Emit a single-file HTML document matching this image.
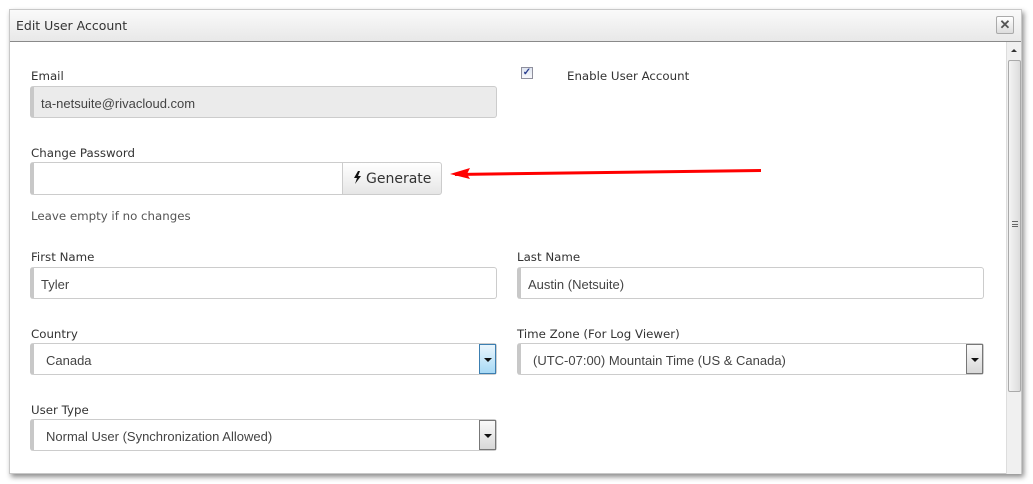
<!DOCTYPE html>
<html><head><style>
*{box-sizing:border-box;margin:0;padding:0}
body{width:1033px;height:484px;background:#fff;position:relative;overflow:hidden;font-family:"DejaVu Sans","Liberation Sans",sans-serif;font-size:12px;color:#333}
.dlg{position:absolute;left:9px;top:9px;width:1013px;height:465px;background:#fff;border:1px solid #c8c8c8;box-shadow:2px 3px 5px rgba(0,0,0,.45)}
.hdr{position:absolute;left:0;top:0;width:100%;height:32px;background:linear-gradient(#fafafa,#e8e8e8);border-bottom:1px solid #8a8a8a}
.hdr span{position:absolute;left:6px;top:8px;font-size:12.5px;color:#333}
.x{position:absolute;left:986px;top:6px;width:18px;height:18px;border:1px solid #aaa;border-radius:2px;background:linear-gradient(#fff,#ddd);font:bold 13px "Liberation Sans",sans-serif;color:#555;text-align:center;line-height:16px}
.lbl{position:absolute;font-size:11.8px;color:#333}
.inp{position:absolute;height:32px;border:1px solid #ccc;border-left:4px solid #c8c8c8;border-radius:3px;background:#fff;font:13px "Liberation Sans",sans-serif;color:#444;padding:8px 7px;padding-top:9px}
.sel{padding-left:12px}
.dd{position:absolute;right:0;top:0;width:17px;height:30px;border:1px solid #777;background:linear-gradient(#fafafa,#d8d8d8)}
.dd:after{content:"";position:absolute;left:4px;top:13px;border-left:4px solid transparent;border-right:4px solid transparent;border-top:4px solid #111}
.dd.blue{border-color:#3c7fb1;background:linear-gradient(#eaf6fd,#a7d9f5)}
.btn{position:absolute;left:342px;top:162px;width:100px;height:33px;border:1px solid #ccc;border-radius:0 3px 3px 0;background:linear-gradient(#fff,#e6e6e6);font:14px "DejaVu Sans",sans-serif;color:#333;padding-top:8px;padding-left:10px}
.sb{position:absolute;left:1006px;top:42px;width:15px;height:432px;background:#f0f0f0;border-left:1px solid #ddd}
.th{position:absolute;left:1px;top:18px;width:13px;height:332px;border:1px solid #aaa;border-radius:2px;background:linear-gradient(90deg,#f4f4f4,#dcdcdc)}
</style></head><body>
<div class="dlg">
 <div class="hdr"><span>Edit User Account</span><div class="x">✕</div></div>
</div>
<div class="sb"><div style="position:absolute;left:4px;top:7px;border-left:3px solid transparent;border-right:3px solid transparent;border-bottom:3px solid #333"></div><div class="th"><div style="position:absolute;left:3px;top:160px;width:6px;height:6px;border-top:1px solid #666;border-bottom:1px solid #666"><div style="margin-top:2px;border-top:1px solid #666"></div></div></div></div>

<div class="lbl" style="left:31px;top:69px">Email</div>
<div class="inp" style="left:30px;top:86px;width:467px;background:#ebebeb">ta-netsuite@rivacloud.com</div>

<div style="position:absolute;left:521px;top:67px;width:12px;height:12px;border:1px solid #8f8f9d;background:linear-gradient(#dfe5f0,#f8f8fb);font:bold 10px sans-serif;color:#2a3d8f;text-align:center;line-height:10px">✓</div>
<div class="lbl" style="left:567px;top:69px">Enable User Account</div>

<div class="lbl" style="left:31px;top:146px">Change Password</div>
<div class="inp" style="left:30px;top:162px;width:314px;border-radius:3px 0 0 3px;height:33px"></div>
<div class="btn"><svg width="9" height="13" viewBox="0 0 9 13" style="vertical-align:-1px;margin-right:4px"><path d="M5 0L1 7h3L2 13l6-8H5l2-5z" fill="#111"/></svg>Generate</div>

<svg style="position:absolute;left:445px;top:160px" width="330" height="25"><path d="M10 13 L316 9 L316 12 L10 16 Z" fill="#f00"/><path d="M5 14 L25 8 L22 14 L25 19 Z" fill="#f00"/></svg>

<div class="lbl" style="left:31px;top:209px;color:#555">Leave empty if no changes</div>

<div class="lbl" style="left:31px;top:250px">First Name</div>
<div class="inp" style="left:30px;top:267px;width:467px">Tyler</div>
<div class="lbl" style="left:517px;top:250px">Last Name</div>
<div class="inp" style="left:517px;top:267px;width:467px">Austin (Netsuite)</div>

<div class="lbl" style="left:31px;top:327px">Country</div>
<div class="inp sel" style="left:30px;top:343px;width:467px">Canada<div class="dd blue"></div></div>
<div class="lbl" style="left:517px;top:327px">Time Zone (For Log Viewer)</div>
<div class="inp sel" style="left:517px;top:343px;width:467px">(UTC-07:00) Mountain Time (US &amp; Canada)<div class="dd"></div></div>

<div class="lbl" style="left:31px;top:403px">User Type</div>
<div class="inp sel" style="left:30px;top:419px;width:467px">Normal User (Synchronization Allowed)<div class="dd"></div></div>
</body></html>
